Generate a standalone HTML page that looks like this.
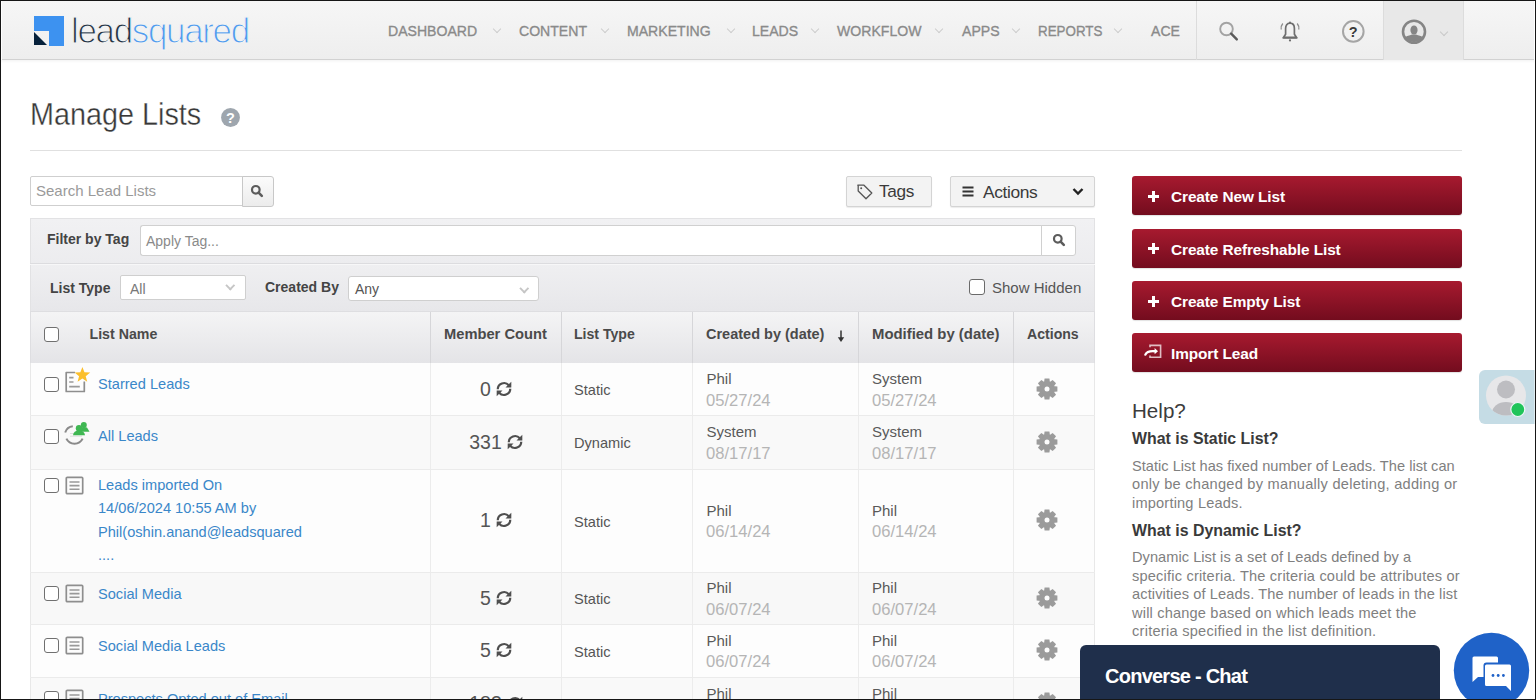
<!DOCTYPE html>
<html><head><meta charset="utf-8">
<style>
*{box-sizing:border-box;margin:0;padding:0}
html,body{width:1536px;height:700px;overflow:hidden;background:#fff;font-family:"Liberation Sans",sans-serif;color:#444}
.a{position:absolute;white-space:nowrap}
#frame{position:absolute;left:0;top:0;width:1536px;height:700px;border:1px solid #161616;z-index:100;pointer-events:none}
#hdr{position:absolute;left:0;top:0;width:1536px;height:60px;background:linear-gradient(#f6f6f6,#eeeeee);border-bottom:1px solid #d2d2d2;border-top:1px solid #fff;box-shadow:0 1px 3px rgba(0,0,0,0.06);z-index:5}
.nav{position:absolute;top:20.9px;font-size:15.3px;line-height:18px;color:#8a8a8a;transform-origin:0 0;transform:scaleX(0.92);-webkit-text-stroke:0.35px #8a8a8a}
.chev{position:absolute;top:24.8px;width:6px;height:6px;border-right:1.9px solid #cdcdcd;border-bottom:1.9px solid #cdcdcd;transform:rotate(45deg)}

.th{position:absolute;top:326px;font-size:14.5px;line-height:17px;font-weight:700;color:#444}
.vd{position:absolute;width:1px;background:#ececec}
.row{position:absolute;left:30px;width:1065px;border-bottom:1px solid #ebebeb;border-left:1px solid #e6e6e6;border-right:1px solid #e6e6e6}
.cb{position:absolute;width:15px;height:15px;border:1.4px solid #707070;border-radius:3px;background:#fff}
.lnk{position:absolute;font-size:14.6px;line-height:23.5px;color:#3a86c8}
.cnt{position:absolute;font-size:19px;line-height:22px;color:#555}
.typ{position:absolute;left:574px;font-size:14.5px;line-height:17px;color:#555}
.who{position:absolute;font-size:15px;line-height:17px;color:#555}
.dt{position:absolute;font-size:16px;line-height:18px;color:#b3b3b3}

.rb{position:absolute;left:1132px;width:330px;height:39px;border-radius:3px;background:linear-gradient(#a71a2f,#730c1e);box-shadow:0 1px 1px rgba(0,0,0,.12)}
.rbt{position:absolute;left:1171px;font-size:15.4px;line-height:18px;font-weight:700;color:#fff;letter-spacing:-0.1px}
.plus{position:absolute;left:1148px;width:11px;height:11px}
.plus:before{content:"";position:absolute;left:0;top:4px;width:11px;height:3px;background:#fff}
.plus:after{content:"";position:absolute;left:4px;top:0;width:3px;height:11px;background:#fff}
.hp{position:absolute;left:1132px;font-size:14.6px;line-height:14.6px;color:#808080;white-space:nowrap}
</style></head><body>
<div id="frame"></div>
<div class="a" style="left:1px;top:0;width:1px;height:60px;background:#fff;z-index:6"></div><div class="a" style="left:1534px;top:0;width:1px;height:61px;background:#fff;z-index:6"></div><div class="a" style="left:1534px;top:61px;width:1px;height:639px;background:rgba(255,255,255,0.45);z-index:20"></div>
<div id="hdr">
  <!-- logo -->
  <svg class="a" style="left:34px;top:15px" width="32" height="32" viewBox="0 0 32 32">
    <path d="M0 0H30V30H15V15H0Z" fill="#3d92f0"/>
    <path d="M0 16L13 29H0Z" fill="#06213b"/>
  </svg>
  <div class="a" style="left:71px;top:10px;font-size:35px;line-height:40px;letter-spacing:-1.35px;font-weight:400;-webkit-text-stroke:1.1px #f3f3f3"><span style="color:#243445">lead</span><span style="color:#4f9bef">squared</span></div>
  <div class="nav" style="left:388px">DASHBOARD</div><div class="chev" style="left:494px"></div>
  <div class="nav" style="left:519px">CONTENT</div><div class="chev" style="left:602px"></div>
  <div class="nav" style="left:627px">MARKETING</div><div class="chev" style="left:728px"></div>
  <div class="nav" style="left:752px">LEADS</div><div class="chev" style="left:812px"></div>
  <div class="nav" style="left:837px">WORKFLOW</div><div class="chev" style="left:936px"></div>
  <div class="nav" style="left:962px">APPS</div><div class="chev" style="left:1013px"></div>
  <div class="nav" style="left:1038px;transform:scaleX(0.875)">REPORTS</div><div class="chev" style="left:1115px"></div>
  <div class="nav" style="left:1151px">ACE</div>
  <div class="a" style="left:1196px;top:0;width:1px;height:59px;background:#dcdcdc"></div>
  <div class="a" style="left:1383px;top:0;width:81px;height:59px;background:#e8e8e8;border-left:1px solid #dcdcdc;border-right:1px solid #dcdcdc"></div>
  <!-- search -->
  <svg class="a" style="left:1216px;top:17px" width="26" height="26" viewBox="0 0 26 26">
    <circle cx="10.5" cy="11" r="6.3" fill="none" stroke="#a3a3a3" stroke-width="1.9"/>
    <path d="M15.2 15.7L20.8 21.4" stroke="#5a5a5a" stroke-width="2.4" stroke-linecap="round"/>
  </svg>
  <!-- bell -->
  <svg class="a" style="left:1278px;top:19px" width="24" height="24" viewBox="0 0 24 24">
    <path d="M12 3.2C9 3.2 7.6 5.6 7.6 8.6V14.2L5.6 17.3H18.4L16.4 14.2V8.6C16.4 5.6 15 3.2 12 3.2Z" fill="none" stroke="#6e6e6e" stroke-width="1.7" stroke-linejoin="round"/>
    <path d="M5.2 17.8H18.8" stroke="#6e6e6e" stroke-width="1.8" stroke-linecap="round"/>
    <circle cx="12" cy="2.6" r="1" fill="#6e6e6e"/>
    <circle cx="12" cy="20.4" r="1.1" fill="#6e6e6e"/>
    <path d="M4.8 3.5Q2.6 6 3.2 9.5M19.2 3.5Q21.4 6 20.8 9.5" fill="none" stroke="#8c8c8c" stroke-width="1.3"/>
  </svg>
  <!-- help -->
  <svg class="a" style="left:1341px;top:18.3px" width="25" height="25" viewBox="0 0 25 25">
    <circle cx="12.3" cy="12.4" r="10.3" fill="none" stroke="#a5a5a5" stroke-width="2"/>
    <text x="12.3" y="17.6" text-anchor="middle" font-family="Liberation Sans" font-weight="700" font-size="14.5" fill="#3a3a3a">?</text>
  </svg>
  <!-- user -->
  <svg class="a" style="left:1401px;top:18px" width="26" height="26" viewBox="0 0 26 26">
    <defs><clipPath id="uc"><circle cx="13" cy="12.7" r="10.5"/></clipPath></defs>
    <circle cx="13" cy="12.7" r="11" fill="none" stroke="#858585" stroke-width="2.6"/>
    <g clip-path="url(#uc)" fill="#858585">
      <ellipse cx="13" cy="11" rx="3.6" ry="4.6"/>
      <path d="M2 26V21Q3 17.5 9 16.3L11 15.5H15L17 16.3Q23 17.5 24 21V26Z"/>
    </g>
  </svg>
  <div class="chev" style="left:1441px;top:28px;width:6px;height:6px;border-color:#c8c8c8"></div>
</div>

<!-- title -->
<div class="a" style="left:29.6px;top:99px;font-size:31.3px;line-height:31.3px;color:#383838;transform-origin:0 0;transform:scaleX(0.92);-webkit-text-stroke:0.35px #fff">Manage Lists</div>
<svg class="a" style="left:219.5px;top:106.5px" width="21" height="21" viewBox="0 0 21 21">
  <circle cx="10.5" cy="10.5" r="9.4" fill="#9ea6ae"/>
  <text x="10.5" y="15.6" text-anchor="middle" font-family="Liberation Sans" font-weight="700" font-size="14.5" fill="#fff">?</text>
</svg>
<div class="a" style="left:30px;top:150px;width:1432px;height:1px;background:#e0e0e0"></div>


<!-- search box -->
<div class="a" style="left:30px;top:176px;width:213px;height:30px;border:1px solid #cfcfcf;border-radius:2px 0 0 2px;background:#fff"></div>
<div class="a" style="left:36px;top:182px;font-size:15px;line-height:17px;color:#9a9a9a">Search Lead Lists</div>
<div class="a" style="left:242px;top:176px;width:32px;height:31px;border:1px solid #c8c8c8;border-radius:0 3px 3px 0;background:linear-gradient(#fbfbfb,#ececec)"></div>
<svg class="a" style="left:250px;top:184px" width="14" height="14" viewBox="0 0 14 14">
  <circle cx="5.8" cy="5.8" r="3.8" fill="none" stroke="#5c5c5c" stroke-width="2.2"/>
  <path d="M8.6 8.6L11.8 11.8" stroke="#5c5c5c" stroke-width="2.6" stroke-linecap="round"/>
</svg>

<!-- tags / actions -->
<div class="a" style="left:846px;top:176px;width:86px;height:31px;border:1px solid #d4d4d4;border-radius:2px;background:#f3f3f3;box-shadow:0 1px 1px rgba(0,0,0,.08)"></div>
<svg class="a" style="left:856px;top:183px" width="18" height="18" viewBox="0 0 18 18">
  <path d="M1.8 2.2H8L15.8 10L10 15.8L2.2 8V2.2Z" fill="none" stroke="#555" stroke-width="1.3" stroke-linejoin="round"/>
  <circle cx="5.2" cy="5.2" r="1" fill="#555"/>
</svg>
<div class="a" style="left:879px;top:181px;font-size:17.2px;line-height:20px;color:#3a3a3a;letter-spacing:-0.3px">Tags</div>
<div class="a" style="left:950px;top:176px;width:145px;height:31px;border:1px solid #d4d4d4;border-radius:2px;background:#f3f3f3;box-shadow:0 1px 1px rgba(0,0,0,.08)"></div>
<svg class="a" style="left:962px;top:186px" width="12" height="12" viewBox="0 0 12 12">
  <path d="M0.5 1.5H11.5M0.5 5.5H11.5M0.5 9.5H11.5" stroke="#333" stroke-width="2"/>
</svg>
<div class="a" style="left:983px;top:181.5px;font-size:17.4px;line-height:20px;color:#3a3a3a;letter-spacing:-0.4px">Actions</div>
<svg class="a" style="left:1072px;top:187px" width="12" height="10" viewBox="0 0 12 10">
  <path d="M1.5 2L6 6.5L10.5 2" fill="none" stroke="#222" stroke-width="2.4"/>
</svg>

<!-- filter panel -->
<div class="a" style="left:30px;top:218px;width:1065px;height:94px;background:linear-gradient(#f1f1f3,#e7e7ea);border:1px solid #e2e2e4"></div>
<div class="a" style="left:30px;top:263px;width:1065px;height:1px;background:#dcdcdf"></div><div class="a" style="left:30px;top:264px;width:1065px;height:1px;background:#f7f7f8"></div>
<div class="a" style="left:31px;top:265px;width:1063px;height:46px;background:linear-gradient(#efeff1,#e7e7ea)"></div>
<div class="a" style="left:47px;top:231px;font-size:14px;line-height:17px;font-weight:700;color:#444">Filter by Tag</div>
<div class="a" style="left:140px;top:225px;width:902px;height:31px;border:1px solid #d0d0d0;border-right:none;border-radius:3px 0 0 3px;background:#fff"></div>
<div class="a" style="left:146px;top:233px;font-size:14px;line-height:17px;color:#8a8a8a">Apply Tag...</div>
<div class="a" style="left:1041px;top:225px;width:35px;height:31px;border:1px solid #d0d0d0;border-radius:0 3px 3px 0;background:#fff"></div>
<svg class="a" style="left:1052px;top:233px" width="14" height="14" viewBox="0 0 14 14">
  <circle cx="5.8" cy="5.8" r="3.8" fill="none" stroke="#5c5c5c" stroke-width="2.2"/>
  <path d="M8.6 8.6L11.8 11.8" stroke="#5c5c5c" stroke-width="2.6" stroke-linecap="round"/>
</svg>

<div class="a" style="left:50px;top:279.7px;font-size:14px;line-height:17px;font-weight:700;color:#444">List Type</div>
<div class="a" style="left:120px;top:275px;width:126px;height:25px;border:1px solid #cfcfcf;border-radius:2px;background:#fff"></div>
<div class="a" style="left:130px;top:281px;font-size:14px;line-height:16px;color:#777">All</div>
<div class="chev" style="left:227px;top:282px;width:6.5px;height:6.5px;border-right-width:2.2px;border-bottom-width:2.2px;border-color:#c6c6c6"></div>
<div class="a" style="left:265px;top:278.6px;font-size:14px;line-height:17px;font-weight:700;color:#444">Created By</div>
<div class="a" style="left:348px;top:276px;width:191px;height:25px;border:1px solid #cfcfcf;border-radius:3px;background:#fff"></div>
<div class="a" style="left:355px;top:281px;font-size:14px;line-height:16px;color:#555">Any</div>
<div class="chev" style="left:521px;top:284.5px;width:6.5px;height:6.5px;border-right-width:2.2px;border-bottom-width:2.2px;border-color:#c6c6c6"></div>
<div class="a" style="left:969px;top:279px;width:16px;height:16px;border:1.3px solid #6a6a6a;border-radius:3px;background:#fff"></div>
<div class="a" style="left:992px;top:279px;font-size:15px;line-height:17px;color:#555">Show Hidden</div>

<!-- table header -->
<div class="a" style="left:30px;top:311px;width:1065px;height:52px;background:linear-gradient(#f4f4f5,#e4e4e7);border:1px solid #dedee1;border-bottom:none"></div>
<div class="a" style="left:430px;top:312px;width:1px;height:51px;background:#d6d6d9"></div>
<div class="a" style="left:561px;top:312px;width:1px;height:51px;background:#d6d6d9"></div>
<div class="a" style="left:692px;top:312px;width:1px;height:51px;background:#d6d6d9"></div>
<div class="a" style="left:858px;top:312px;width:1px;height:51px;background:#d6d6d9"></div>
<div class="a" style="left:1013px;top:312px;width:1px;height:51px;background:#d6d6d9"></div>
<div class="cb" style="left:44px;top:327px"></div>
<div class="a" style="left:89.5px;top:327.18px;font-size:14.2px;line-height:14.2px;color:#4a4a4a;font-weight:700;">List Name</div>
<div class="a" style="left:444px;top:326.76px;font-size:14.7px;line-height:14.7px;color:#4a4a4a;font-weight:700;">Member Count</div>
<div class="a" style="left:574px;top:327.26px;font-size:14.1px;line-height:14.1px;color:#4a4a4a;font-weight:700;">List Type</div>
<div class="a" style="left:706px;top:326.93px;font-size:14.5px;line-height:14.5px;color:#4a4a4a;font-weight:700;">Created by (date)</div>
<div class="a" style="left:872px;top:326.59px;font-size:14.9px;line-height:14.9px;color:#4a4a4a;font-weight:700;">Modified by (date)</div>
<div class="a" style="left:1027px;top:327.26px;font-size:14.1px;line-height:14.1px;color:#4a4a4a;font-weight:700;">Actions</div>
<svg class="a" style="left:836px;top:328.5px" width="10" height="14" viewBox="0 0 10 14"><path d="M5 1.5V9" stroke="#333" stroke-width="1.5"/><path d="M1.8 8.2H8.2L5 13Z" fill="#333"/></svg>
<div class="a" style="left:30px;top:363px;width:1065px;height:52px;background:#fdfdfd;border-left:1px solid #e8e8e8;border-right:1px solid #e8e8e8"></div>
<div class="a" style="left:30px;top:415px;width:1065px;height:1px;background:#ebebeb;z-index:2"></div>
<div class="a" style="left:430px;top:363px;width:1px;height:52px;background:#ececec"></div>
<div class="a" style="left:561px;top:363px;width:1px;height:52px;background:#ececec"></div>
<div class="a" style="left:692px;top:363px;width:1px;height:52px;background:#ececec"></div>
<div class="a" style="left:858px;top:363px;width:1px;height:52px;background:#ececec"></div>
<div class="a" style="left:1013px;top:363px;width:1px;height:52px;background:#ececec"></div>
<div class="cb" style="left:44px;top:377px"></div>
<svg class="a" style="left:65px;top:365.5px" width="30" height="28" viewBox="0 0 30 28"><path d="M10 6.5H1.2V25.5H19.3V15.5" fill="none" stroke="#8e8e8e" stroke-width="1.7" stroke-linejoin="round"/><path d="M4.2 11.6H8.5M4.2 16H8.5M4.2 20.6H14.8" stroke="#9a9a9a" stroke-width="1.7"/><path d="M17.40 0.90L19.46 6.27L25.20 6.57L20.73 10.18L22.22 15.73L17.40 12.60L12.58 15.73L14.07 10.18L9.60 6.57L15.34 6.27Z" fill="#fbbf2d"/></svg>
<div class="a" style="left:98px;top:376.94px;font-size:14.6px;line-height:14.6px;color:#3a87c9;font-weight:400;">Starred Leads</div>
<div class="a" style="left:480.0px;top:379.99px;font-size:19.5px;line-height:19.5px;color:#555;font-weight:400;">0</div>
<svg class="a" style="left:496px;top:381px" width="16" height="16" viewBox="0 0 16 16"><path d="M1.75 8.3A6.3 6.3 0 0 1 12.8 4.25" fill="none" stroke="#4f4f4f" stroke-width="2.2"/><path d="M15.3 0.7V6.5H9.5Z" fill="#4f4f4f"/><path d="M14.25 7.7A6.3 6.3 0 0 1 3.2 11.75" fill="none" stroke="#4f4f4f" stroke-width="2.2"/><path d="M0.7 15.3V9.5H6.5Z" fill="#4f4f4f"/></svg>
<div class="a" style="left:574px;top:383.44px;font-size:14.6px;line-height:14.6px;color:#555;font-weight:400;">Static</div>
<div class="a" style="left:706.5px;top:371.30px;font-size:15px;line-height:15px;color:#595959;font-weight:400;">Phil</div>
<div class="a" style="left:706px;top:392.75px;font-size:16.6px;line-height:16.6px;color:#b5b5b5;font-weight:400;">05/27/24</div>
<div class="a" style="left:872px;top:371.30px;font-size:15px;line-height:15px;color:#595959;font-weight:400;">System</div>
<div class="a" style="left:872px;top:392.75px;font-size:16.6px;line-height:16.6px;color:#b5b5b5;font-weight:400;">05/27/24</div>
<svg class="a" style="left:1036.3px;top:377.8px" width="22" height="22" viewBox="0 0 22 22"><g fill="#9b9b9b" transform="translate(11 11)"><circle r="7.4"/><path d="M-2.4 -10.4H2.4L3.1 -6H-3.1Z" transform="rotate(0)"/><path d="M-2.4 -10.4H2.4L3.1 -6H-3.1Z" transform="rotate(45)"/><path d="M-2.4 -10.4H2.4L3.1 -6H-3.1Z" transform="rotate(90)"/><path d="M-2.4 -10.4H2.4L3.1 -6H-3.1Z" transform="rotate(135)"/><path d="M-2.4 -10.4H2.4L3.1 -6H-3.1Z" transform="rotate(180)"/><path d="M-2.4 -10.4H2.4L3.1 -6H-3.1Z" transform="rotate(225)"/><path d="M-2.4 -10.4H2.4L3.1 -6H-3.1Z" transform="rotate(270)"/><path d="M-2.4 -10.4H2.4L3.1 -6H-3.1Z" transform="rotate(315)"/></g><circle cx="11" cy="11" r="2.5" fill="#fdfdfd"/></svg>
<div class="a" style="left:30px;top:415px;width:1065px;height:54px;background:#f9f9f9;border-left:1px solid #e8e8e8;border-right:1px solid #e8e8e8"></div>
<div class="a" style="left:30px;top:469px;width:1065px;height:1px;background:#ebebeb;z-index:2"></div>
<div class="a" style="left:430px;top:415px;width:1px;height:54px;background:#ececec"></div>
<div class="a" style="left:561px;top:415px;width:1px;height:54px;background:#ececec"></div>
<div class="a" style="left:692px;top:415px;width:1px;height:54px;background:#ececec"></div>
<div class="a" style="left:858px;top:415px;width:1px;height:54px;background:#ececec"></div>
<div class="a" style="left:1013px;top:415px;width:1px;height:54px;background:#ececec"></div>
<div class="cb" style="left:44px;top:428.5px"></div>
<svg class="a" style="left:64px;top:420.5px" width="28" height="26" viewBox="0 0 28 26"><path d="M1.2 11.5A9 9 0 0 1 8.8 5.2" fill="none" stroke="#8a8a8a" stroke-width="2"/><path d="M2.4 17.6A9 9 0 0 0 18.6 17.6" fill="none" stroke="#8a8a8a" stroke-width="2.1"/><path d="M6 12.5H18M6 15.2H18" stroke="#dedede" stroke-width="1"/><circle cx="19.8" cy="4" r="3" fill="#3fb752"/><path d="M16.5 6.5Q19.8 5.5 23 6.5L25.5 10.8H16Z" fill="#3fb752"/><circle cx="15" cy="7.2" r="3.2" fill="#3fb752"/><path d="M9 14.3Q9.5 9.5 15 9.5Q20.5 9.5 21 14.3Z" fill="#3fb752"/></svg>
<div class="a" style="left:98px;top:429.24px;font-size:14.6px;line-height:14.6px;color:#3a87c9;font-weight:400;">All Leads</div>
<div class="a" style="left:469.25px;top:432.99px;font-size:19.5px;line-height:19.5px;color:#555;font-weight:400;">331</div>
<svg class="a" style="left:507px;top:434px" width="16" height="16" viewBox="0 0 16 16"><path d="M1.75 8.3A6.3 6.3 0 0 1 12.8 4.25" fill="none" stroke="#4f4f4f" stroke-width="2.2"/><path d="M15.3 0.7V6.5H9.5Z" fill="#4f4f4f"/><path d="M14.25 7.7A6.3 6.3 0 0 1 3.2 11.75" fill="none" stroke="#4f4f4f" stroke-width="2.2"/><path d="M0.7 15.3V9.5H6.5Z" fill="#4f4f4f"/></svg>
<div class="a" style="left:574px;top:436.44px;font-size:14.6px;line-height:14.6px;color:#555;font-weight:400;">Dynamic</div>
<div class="a" style="left:706.5px;top:424.30px;font-size:15px;line-height:15px;color:#595959;font-weight:400;">System</div>
<div class="a" style="left:706px;top:445.75px;font-size:16.6px;line-height:16.6px;color:#b5b5b5;font-weight:400;">08/17/17</div>
<div class="a" style="left:872px;top:424.30px;font-size:15px;line-height:15px;color:#595959;font-weight:400;">System</div>
<div class="a" style="left:872px;top:445.75px;font-size:16.6px;line-height:16.6px;color:#b5b5b5;font-weight:400;">08/17/17</div>
<svg class="a" style="left:1036.3px;top:430.8px" width="22" height="22" viewBox="0 0 22 22"><g fill="#9b9b9b" transform="translate(11 11)"><circle r="7.4"/><path d="M-2.4 -10.4H2.4L3.1 -6H-3.1Z" transform="rotate(0)"/><path d="M-2.4 -10.4H2.4L3.1 -6H-3.1Z" transform="rotate(45)"/><path d="M-2.4 -10.4H2.4L3.1 -6H-3.1Z" transform="rotate(90)"/><path d="M-2.4 -10.4H2.4L3.1 -6H-3.1Z" transform="rotate(135)"/><path d="M-2.4 -10.4H2.4L3.1 -6H-3.1Z" transform="rotate(180)"/><path d="M-2.4 -10.4H2.4L3.1 -6H-3.1Z" transform="rotate(225)"/><path d="M-2.4 -10.4H2.4L3.1 -6H-3.1Z" transform="rotate(270)"/><path d="M-2.4 -10.4H2.4L3.1 -6H-3.1Z" transform="rotate(315)"/></g><circle cx="11" cy="11" r="2.5" fill="#fdfdfd"/></svg>
<div class="a" style="left:30px;top:469px;width:1065px;height:103px;background:#fdfdfd;border-left:1px solid #e8e8e8;border-right:1px solid #e8e8e8"></div>
<div class="a" style="left:30px;top:572px;width:1065px;height:1px;background:#ebebeb;z-index:2"></div>
<div class="a" style="left:430px;top:469px;width:1px;height:103px;background:#ececec"></div>
<div class="a" style="left:561px;top:469px;width:1px;height:103px;background:#ececec"></div>
<div class="a" style="left:692px;top:469px;width:1px;height:103px;background:#ececec"></div>
<div class="a" style="left:858px;top:469px;width:1px;height:103px;background:#ececec"></div>
<div class="a" style="left:1013px;top:469px;width:1px;height:103px;background:#ececec"></div>
<div class="cb" style="left:44px;top:477.5px"></div>
<svg class="a" style="left:65px;top:475.5px" width="20" height="20" viewBox="0 0 20 20"><rect x="1.3" y="1.3" width="16.4" height="16.4" rx="1" fill="none" stroke="#8e8e8e" stroke-width="1.7"/><path d="M4.5 6H14.5M4.5 9.6H14.5M4.5 13.3H14.5" stroke="#999" stroke-width="1.6"/></svg>
<div class="a" style="left:98px;top:477.84px;font-size:14.6px;line-height:14.6px;color:#3a87c9;font-weight:400;">Leads imported On</div>
<div class="a" style="left:98px;top:501.34px;font-size:14.6px;line-height:14.6px;color:#3a87c9;font-weight:400;">14/06/2024 10:55 AM by</div>
<div class="a" style="left:98px;top:524.84px;font-size:14.6px;line-height:14.6px;color:#3a87c9;font-weight:400;">Phil(oshin.anand@leadsquared</div>
<div class="a" style="left:98px;top:548.34px;font-size:14.6px;line-height:14.6px;color:#3a87c9;font-weight:400;">....</div>
<div class="a" style="left:480.0px;top:511.49px;font-size:19.5px;line-height:19.5px;color:#555;font-weight:400;">1</div>
<svg class="a" style="left:496px;top:512px" width="16" height="16" viewBox="0 0 16 16"><path d="M1.75 8.3A6.3 6.3 0 0 1 12.8 4.25" fill="none" stroke="#4f4f4f" stroke-width="2.2"/><path d="M15.3 0.7V6.5H9.5Z" fill="#4f4f4f"/><path d="M14.25 7.7A6.3 6.3 0 0 1 3.2 11.75" fill="none" stroke="#4f4f4f" stroke-width="2.2"/><path d="M0.7 15.3V9.5H6.5Z" fill="#4f4f4f"/></svg>
<div class="a" style="left:574px;top:514.94px;font-size:14.6px;line-height:14.6px;color:#555;font-weight:400;">Static</div>
<div class="a" style="left:706.5px;top:502.80px;font-size:15px;line-height:15px;color:#595959;font-weight:400;">Phil</div>
<div class="a" style="left:706px;top:524.25px;font-size:16.6px;line-height:16.6px;color:#b5b5b5;font-weight:400;">06/14/24</div>
<div class="a" style="left:872px;top:502.80px;font-size:15px;line-height:15px;color:#595959;font-weight:400;">Phil</div>
<div class="a" style="left:872px;top:524.25px;font-size:16.6px;line-height:16.6px;color:#b5b5b5;font-weight:400;">06/14/24</div>
<svg class="a" style="left:1036.3px;top:509.29999999999995px" width="22" height="22" viewBox="0 0 22 22"><g fill="#9b9b9b" transform="translate(11 11)"><circle r="7.4"/><path d="M-2.4 -10.4H2.4L3.1 -6H-3.1Z" transform="rotate(0)"/><path d="M-2.4 -10.4H2.4L3.1 -6H-3.1Z" transform="rotate(45)"/><path d="M-2.4 -10.4H2.4L3.1 -6H-3.1Z" transform="rotate(90)"/><path d="M-2.4 -10.4H2.4L3.1 -6H-3.1Z" transform="rotate(135)"/><path d="M-2.4 -10.4H2.4L3.1 -6H-3.1Z" transform="rotate(180)"/><path d="M-2.4 -10.4H2.4L3.1 -6H-3.1Z" transform="rotate(225)"/><path d="M-2.4 -10.4H2.4L3.1 -6H-3.1Z" transform="rotate(270)"/><path d="M-2.4 -10.4H2.4L3.1 -6H-3.1Z" transform="rotate(315)"/></g><circle cx="11" cy="11" r="2.5" fill="#fdfdfd"/></svg>
<div class="a" style="left:30px;top:572px;width:1065px;height:52px;background:#f8f8f8;border-left:1px solid #e8e8e8;border-right:1px solid #e8e8e8"></div>
<div class="a" style="left:30px;top:624px;width:1065px;height:1px;background:#ebebeb;z-index:2"></div>
<div class="a" style="left:430px;top:572px;width:1px;height:52px;background:#ececec"></div>
<div class="a" style="left:561px;top:572px;width:1px;height:52px;background:#ececec"></div>
<div class="a" style="left:692px;top:572px;width:1px;height:52px;background:#ececec"></div>
<div class="a" style="left:858px;top:572px;width:1px;height:52px;background:#ececec"></div>
<div class="a" style="left:1013px;top:572px;width:1px;height:52px;background:#ececec"></div>
<div class="cb" style="left:44px;top:586px"></div>
<svg class="a" style="left:65px;top:584px" width="20" height="20" viewBox="0 0 20 20"><rect x="1.3" y="1.3" width="16.4" height="16.4" rx="1" fill="none" stroke="#8e8e8e" stroke-width="1.7"/><path d="M4.5 6H14.5M4.5 9.6H14.5M4.5 13.3H14.5" stroke="#999" stroke-width="1.6"/></svg>
<div class="a" style="left:98px;top:586.64px;font-size:14.6px;line-height:14.6px;color:#3a87c9;font-weight:400;">Social Media</div>
<div class="a" style="left:480.0px;top:588.99px;font-size:19.5px;line-height:19.5px;color:#555;font-weight:400;">5</div>
<svg class="a" style="left:496px;top:590px" width="16" height="16" viewBox="0 0 16 16"><path d="M1.75 8.3A6.3 6.3 0 0 1 12.8 4.25" fill="none" stroke="#4f4f4f" stroke-width="2.2"/><path d="M15.3 0.7V6.5H9.5Z" fill="#4f4f4f"/><path d="M14.25 7.7A6.3 6.3 0 0 1 3.2 11.75" fill="none" stroke="#4f4f4f" stroke-width="2.2"/><path d="M0.7 15.3V9.5H6.5Z" fill="#4f4f4f"/></svg>
<div class="a" style="left:574px;top:592.44px;font-size:14.6px;line-height:14.6px;color:#555;font-weight:400;">Static</div>
<div class="a" style="left:706.5px;top:580.30px;font-size:15px;line-height:15px;color:#595959;font-weight:400;">Phil</div>
<div class="a" style="left:706px;top:601.75px;font-size:16.6px;line-height:16.6px;color:#b5b5b5;font-weight:400;">06/07/24</div>
<div class="a" style="left:872px;top:580.30px;font-size:15px;line-height:15px;color:#595959;font-weight:400;">Phil</div>
<div class="a" style="left:872px;top:601.75px;font-size:16.6px;line-height:16.6px;color:#b5b5b5;font-weight:400;">06/07/24</div>
<svg class="a" style="left:1036.3px;top:586.8px" width="22" height="22" viewBox="0 0 22 22"><g fill="#9b9b9b" transform="translate(11 11)"><circle r="7.4"/><path d="M-2.4 -10.4H2.4L3.1 -6H-3.1Z" transform="rotate(0)"/><path d="M-2.4 -10.4H2.4L3.1 -6H-3.1Z" transform="rotate(45)"/><path d="M-2.4 -10.4H2.4L3.1 -6H-3.1Z" transform="rotate(90)"/><path d="M-2.4 -10.4H2.4L3.1 -6H-3.1Z" transform="rotate(135)"/><path d="M-2.4 -10.4H2.4L3.1 -6H-3.1Z" transform="rotate(180)"/><path d="M-2.4 -10.4H2.4L3.1 -6H-3.1Z" transform="rotate(225)"/><path d="M-2.4 -10.4H2.4L3.1 -6H-3.1Z" transform="rotate(270)"/><path d="M-2.4 -10.4H2.4L3.1 -6H-3.1Z" transform="rotate(315)"/></g><circle cx="11" cy="11" r="2.5" fill="#fdfdfd"/></svg>
<div class="a" style="left:30px;top:624px;width:1065px;height:53px;background:#fdfdfd;border-left:1px solid #e8e8e8;border-right:1px solid #e8e8e8"></div>
<div class="a" style="left:30px;top:677px;width:1065px;height:1px;background:#ebebeb;z-index:2"></div>
<div class="a" style="left:430px;top:624px;width:1px;height:53px;background:#ececec"></div>
<div class="a" style="left:561px;top:624px;width:1px;height:53px;background:#ececec"></div>
<div class="a" style="left:692px;top:624px;width:1px;height:53px;background:#ececec"></div>
<div class="a" style="left:858px;top:624px;width:1px;height:53px;background:#ececec"></div>
<div class="a" style="left:1013px;top:624px;width:1px;height:53px;background:#ececec"></div>
<div class="cb" style="left:44px;top:638px"></div>
<svg class="a" style="left:65px;top:636px" width="20" height="20" viewBox="0 0 20 20"><rect x="1.3" y="1.3" width="16.4" height="16.4" rx="1" fill="none" stroke="#8e8e8e" stroke-width="1.7"/><path d="M4.5 6H14.5M4.5 9.6H14.5M4.5 13.3H14.5" stroke="#999" stroke-width="1.6"/></svg>
<div class="a" style="left:98px;top:638.64px;font-size:14.6px;line-height:14.6px;color:#3a87c9;font-weight:400;">Social Media Leads</div>
<div class="a" style="left:480.0px;top:641.49px;font-size:19.5px;line-height:19.5px;color:#555;font-weight:400;">5</div>
<svg class="a" style="left:496px;top:642px" width="16" height="16" viewBox="0 0 16 16"><path d="M1.75 8.3A6.3 6.3 0 0 1 12.8 4.25" fill="none" stroke="#4f4f4f" stroke-width="2.2"/><path d="M15.3 0.7V6.5H9.5Z" fill="#4f4f4f"/><path d="M14.25 7.7A6.3 6.3 0 0 1 3.2 11.75" fill="none" stroke="#4f4f4f" stroke-width="2.2"/><path d="M0.7 15.3V9.5H6.5Z" fill="#4f4f4f"/></svg>
<div class="a" style="left:574px;top:644.94px;font-size:14.6px;line-height:14.6px;color:#555;font-weight:400;">Static</div>
<div class="a" style="left:706.5px;top:632.80px;font-size:15px;line-height:15px;color:#595959;font-weight:400;">Phil</div>
<div class="a" style="left:706px;top:654.25px;font-size:16.6px;line-height:16.6px;color:#b5b5b5;font-weight:400;">06/07/24</div>
<div class="a" style="left:872px;top:632.80px;font-size:15px;line-height:15px;color:#595959;font-weight:400;">Phil</div>
<div class="a" style="left:872px;top:654.25px;font-size:16.6px;line-height:16.6px;color:#b5b5b5;font-weight:400;">06/07/24</div>
<svg class="a" style="left:1036.3px;top:639.3px" width="22" height="22" viewBox="0 0 22 22"><g fill="#9b9b9b" transform="translate(11 11)"><circle r="7.4"/><path d="M-2.4 -10.4H2.4L3.1 -6H-3.1Z" transform="rotate(0)"/><path d="M-2.4 -10.4H2.4L3.1 -6H-3.1Z" transform="rotate(45)"/><path d="M-2.4 -10.4H2.4L3.1 -6H-3.1Z" transform="rotate(90)"/><path d="M-2.4 -10.4H2.4L3.1 -6H-3.1Z" transform="rotate(135)"/><path d="M-2.4 -10.4H2.4L3.1 -6H-3.1Z" transform="rotate(180)"/><path d="M-2.4 -10.4H2.4L3.1 -6H-3.1Z" transform="rotate(225)"/><path d="M-2.4 -10.4H2.4L3.1 -6H-3.1Z" transform="rotate(270)"/><path d="M-2.4 -10.4H2.4L3.1 -6H-3.1Z" transform="rotate(315)"/></g><circle cx="11" cy="11" r="2.5" fill="#fdfdfd"/></svg>
<div class="a" style="left:30px;top:677px;width:1065px;height:53px;background:#f9f9f9;border-left:1px solid #e8e8e8;border-right:1px solid #e8e8e8"></div>
<div class="a" style="left:30px;top:730px;width:1065px;height:1px;background:#ebebeb;z-index:2"></div>
<div class="a" style="left:430px;top:677px;width:1px;height:53px;background:#ececec"></div>
<div class="a" style="left:561px;top:677px;width:1px;height:53px;background:#ececec"></div>
<div class="a" style="left:692px;top:677px;width:1px;height:53px;background:#ececec"></div>
<div class="a" style="left:858px;top:677px;width:1px;height:53px;background:#ececec"></div>
<div class="a" style="left:1013px;top:677px;width:1px;height:53px;background:#ececec"></div>
<div class="cb" style="left:44px;top:691px"></div>
<svg class="a" style="left:65px;top:689px" width="20" height="20" viewBox="0 0 20 20"><rect x="1.3" y="1.3" width="16.4" height="16.4" rx="1" fill="none" stroke="#8e8e8e" stroke-width="1.7"/><path d="M4.5 6H14.5M4.5 9.6H14.5M4.5 13.3H14.5" stroke="#999" stroke-width="1.6"/></svg>
<div class="a" style="left:98px;top:691.64px;font-size:14.6px;line-height:14.6px;color:#3a87c9;font-weight:400;">Prospects Opted out of Email</div>
<div class="a" style="left:469.25px;top:694.49px;font-size:19.5px;line-height:19.5px;color:#555;font-weight:400;">183</div>
<svg class="a" style="left:507px;top:696px" width="16" height="16" viewBox="0 0 16 16"><path d="M1.75 8.3A6.3 6.3 0 0 1 12.8 4.25" fill="none" stroke="#4f4f4f" stroke-width="2.2"/><path d="M15.3 0.7V6.5H9.5Z" fill="#4f4f4f"/><path d="M14.25 7.7A6.3 6.3 0 0 1 3.2 11.75" fill="none" stroke="#4f4f4f" stroke-width="2.2"/><path d="M0.7 15.3V9.5H6.5Z" fill="#4f4f4f"/></svg>
<div class="a" style="left:574px;top:697.94px;font-size:14.6px;line-height:14.6px;color:#555;font-weight:400;">Refreshable</div>
<div class="a" style="left:706.5px;top:685.80px;font-size:15px;line-height:15px;color:#595959;font-weight:400;">Phil</div>
<div class="a" style="left:706px;top:707.25px;font-size:16.6px;line-height:16.6px;color:#b5b5b5;font-weight:400;">06/07/24</div>
<div class="a" style="left:872px;top:685.80px;font-size:15px;line-height:15px;color:#595959;font-weight:400;">Phil</div>
<div class="a" style="left:872px;top:707.25px;font-size:16.6px;line-height:16.6px;color:#b5b5b5;font-weight:400;">06/07/24</div>
<svg class="a" style="left:1036.3px;top:692.3px" width="22" height="22" viewBox="0 0 22 22"><g fill="#9b9b9b" transform="translate(11 11)"><circle r="7.4"/><path d="M-2.4 -10.4H2.4L3.1 -6H-3.1Z" transform="rotate(0)"/><path d="M-2.4 -10.4H2.4L3.1 -6H-3.1Z" transform="rotate(45)"/><path d="M-2.4 -10.4H2.4L3.1 -6H-3.1Z" transform="rotate(90)"/><path d="M-2.4 -10.4H2.4L3.1 -6H-3.1Z" transform="rotate(135)"/><path d="M-2.4 -10.4H2.4L3.1 -6H-3.1Z" transform="rotate(180)"/><path d="M-2.4 -10.4H2.4L3.1 -6H-3.1Z" transform="rotate(225)"/><path d="M-2.4 -10.4H2.4L3.1 -6H-3.1Z" transform="rotate(270)"/><path d="M-2.4 -10.4H2.4L3.1 -6H-3.1Z" transform="rotate(315)"/></g><circle cx="11" cy="11" r="2.5" fill="#fdfdfd"/></svg>
<!-- right panel -->
<div class="rb" style="top:176px"></div><div class="plus" style="top:190.5px"></div><div class="rbt" style="top:188px">Create New List</div>
<div class="rb" style="top:229px"></div><div class="plus" style="top:243px"></div><div class="rbt" style="top:241px">Create Refreshable List</div>
<div class="rb" style="top:281px"></div><div class="plus" style="top:295.5px"></div><div class="rbt" style="top:293px">Create Empty List</div>
<div class="rb" style="top:333px"></div>
<svg class="a" style="left:1142px;top:343px" width="20" height="17" viewBox="0 0 20 17"><path d="M8 4.2V2.4H18.6V14.2H8V12.4" fill="none" stroke="rgba(255,255,255,0.72)" stroke-width="1.6"/><path d="M3.4 11.6Q5 7.6 12.8 8.2" fill="none" stroke="#fff" stroke-width="2.4" stroke-linecap="round"/><path d="M12.6 5L16 8.2L12.6 11.2Z" fill="#fff"/></svg>
<div class="rbt" style="top:345px">Import Lead</div>

<div class="a" style="left:1132px;top:399px;font-size:20.6px;line-height:24px;color:#3c3c3c">Help?</div>
<div class="a" style="left:1132px;top:429px;font-size:15.9px;line-height:19px;font-weight:700;color:#3a3a3a">What is Static List?</div>
<div class="hp" style="top:458.64px;letter-spacing:0.018px">Static List has fixed number of Leads. The list can</div>
<div class="hp" style="top:477.14px;letter-spacing:0.261px">only be changed by manually deleting, adding or</div>
<div class="hp" style="top:495.64px;letter-spacing:0.180px">importing Leads.</div>
<div class="a" style="left:1132px;top:521px;font-size:15.9px;line-height:19px;font-weight:700;color:#3a3a3a">What is Dynamic List?</div>
<div class="hp" style="top:550.14px;letter-spacing:0.040px">Dynamic List is a set of Leads defined by a</div>
<div class="hp" style="top:568.64px;letter-spacing:0.187px">specific criteria. The criteria could be attributes or</div>
<div class="hp" style="top:587.14px;letter-spacing:0.115px">activities of Leads. The number of leads in the list</div>
<div class="hp" style="top:605.64px;letter-spacing:0.174px">will change based on which leads meet the</div>
<div class="hp" style="top:624.14px;letter-spacing:0.255px">criteria specified in the list definition.</div>

<!-- avatar widget -->
<div class="a" style="left:1479px;top:370px;width:70px;height:54px;border-radius:6px;background:#c5dce5"></div>
<svg class="a" style="left:1484px;top:374px" width="46" height="46" viewBox="0 0 46 46">
  <defs><clipPath id="av"><circle cx="22" cy="21.5" r="20"/></clipPath></defs>
  <circle cx="22" cy="21.5" r="20" fill="#e7e7e9"/>
  <g clip-path="url(#av)" fill="#bdbdc1"><ellipse cx="22" cy="39" rx="14" ry="11"/><circle cx="22" cy="15.5" r="9.8" fill="#e7e7e9"/><circle cx="22" cy="15.5" r="9"/></g>
  <circle cx="33.8" cy="35.5" r="7" fill="#1fc45a" stroke="#eef6f8" stroke-width="1.2"/>
</svg>

<!-- chat bar -->
<div class="a" style="left:1080px;top:645px;width:360px;height:60px;border-radius:6px 6px 0 0;background:#1f2f4b;z-index:10"></div>
<div class="a" style="z-index:11;left:1105px;top:666.3px;font-size:20px;line-height:20px;font-weight:700;color:#fff;letter-spacing:-0.75px">Converse - Chat</div>
<svg class="a" style="z-index:11;left:1453px;top:632px" width="77" height="77" viewBox="0 0 77 77">
  <circle cx="38.5" cy="38.5" r="37.7" fill="#1f62c8"/>
  <path d="M21 24.5Q19.5 24.5 19.5 26V50L25 45H43.5Q45 45 45 43.5V26Q45 24.5 43.5 24.5Z" fill="#fff"/>
  <rect x="30.5" y="30.5" width="28" height="25" rx="3" fill="#1f62c8"/>
  <path d="M33.5 32.5Q32 32.5 32 34V52.5Q32 54 33.5 54H53L58 59V34Q58 32.5 56.5 32.5Z" fill="#fff"/>
  <circle cx="40" cy="43.5" r="1.4" fill="#1f62c8"/><circle cx="45.2" cy="43.5" r="1.4" fill="#1f62c8"/><circle cx="50.4" cy="43.5" r="1.4" fill="#1f62c8"/>
</svg>

</body></html>
